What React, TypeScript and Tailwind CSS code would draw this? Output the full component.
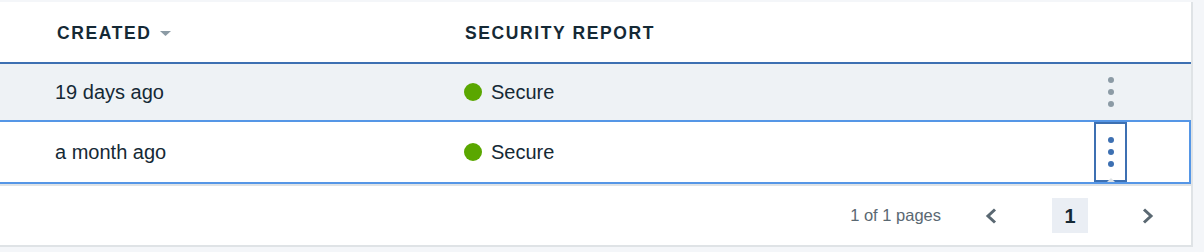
import type { ReactNode } from 'react'

const font = "font-['Liberation_Sans','Helvetica_Neue',Arial,sans-serif]"

type Row = { created: string; status: string; focused?: boolean; hover?: boolean }

const rows: Row[] = [
  { created: '19 days ago', status: 'Secure', hover: true },
  { created: 'a month ago', status: 'Secure', focused: true },
]

function Dots({ color }: { color: string }) {
  return (
    <svg width="6" height="30" viewBox="0 0 6 30" fill={color}>
      <circle cx="3" cy="3" r="3" />
      <circle cx="3" cy="15" r="3" />
      <circle cx="3" cy="27" r="3" />
    </svg>
  )
}

function Chevron({ dir }: { dir: 'left' | 'right' }) {
  return (
    <svg width="12" height="16" viewBox="0 0 12 16" fill="none" stroke="#5a6872" strokeWidth="3">
      {dir === 'left' ? <path d="M10 1.5 L3 8 L10 14.5" /> : <path d="M2 1.5 L9 8 L2 14.5" />}
    </svg>
  )
}

function Status({ label }: { label: string }) {
  return (
    <span className="flex items-center gap-[9px]">
      <span className="w-[18px] h-[18px] rounded-full bg-[#5aa700]" />
      {label}
    </span>
  )
}

function Cell({ children, className = '' }: { children?: ReactNode; className?: string }) {
  return <div className={`flex items-center ${className}`}>{children}</div>
}

export default function App() {
  return (
    <div className={`w-[1204px] h-[252px] bg-[#f4f6f9] pt-[2px] ${font}`}>
      <div className="w-[1193px] bg-white border-r-2 border-b-2 border-[#dfe3e6]">
        {/* header */}
        <div className="grid grid-cols-[464px_1fr] h-[62px] pt-[3px] border-b-2 border-[#3d70b2] text-[17.5px] font-bold tracking-[1.6px] text-[#152935]">
          <Cell className="pl-[57px] gap-[8px]">
            CREATED
            <svg width="11" height="5" viewBox="0 0 11 5" fill="#8c9ba5">
              <path d="M0 0 H11 L5.5 5 Z" />
            </svg>
          </Cell>
          <Cell className="pl-px">SECURITY REPORT</Cell>
        </div>

        {/* rows */}
        {rows.map((r) =>
          r.focused ? (
            <div
              key={r.created}
              className="grid grid-cols-[464px_1fr_33px_62px] h-[64px] border-y-2 border-r-2 border-[#5596e6] text-[20px] text-[#152935]"
            >
              <Cell className="pl-[55px]">{r.created}</Cell>
              <Cell>
                <Status label={r.status} />
              </Cell>
              <div className="relative flex items-center justify-center border-2 border-[#3d70b2]">
                <Dots color="#3d70b2" />
                <span className="absolute bottom-[-2px] left-1/2 -translate-x-1/2 w-0 h-0 border-x-[4px] border-x-transparent border-b-[4px] border-b-[#dfe3e6]" />
              </div>
              <div />
            </div>
          ) : (
            <div
              key={r.created}
              className="grid grid-cols-[464px_1fr_33px_64px] h-[56px] bg-[#eef2f5] text-[20px] text-[#152935]"
            >
              <Cell className="pl-[55px]">{r.created}</Cell>
              <Cell>
                <Status label={r.status} />
              </Cell>
              <Cell className="justify-center">
                <Dots color="#8c9ba5" />
              </Cell>
              <div />
            </div>
          ),
        )}

        {/* pagination */}
        <div className="flex items-center justify-end h-[61px] border-t-2 border-[#dfe3e6] pr-[37px]">
          <span className="text-[16.5px] text-[#5a6872]">1 of 1 pages</span>
          <span className="ml-[44px] flex">
            <Chevron dir="left" />
          </span>
          <span className="ml-[55px] w-[36px] h-[35px] flex items-center justify-center bg-[#eaeef4] text-[20px] font-bold text-[#152935]">
            1
          </span>
          <span className="ml-[54px] flex">
            <Chevron dir="right" />
          </span>
        </div>
      </div>
    </div>
  )
}
